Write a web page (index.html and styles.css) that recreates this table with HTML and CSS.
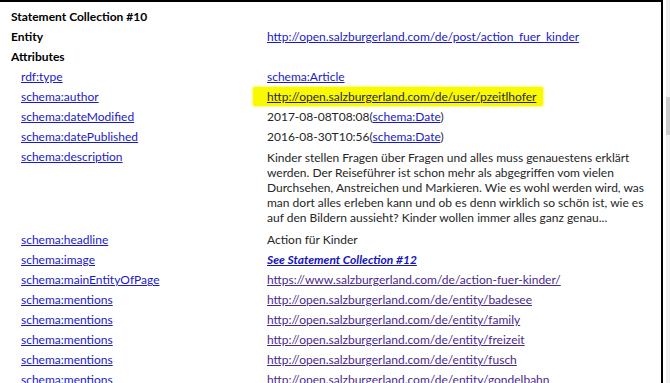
FILE: index.html
```html
<!DOCTYPE html>
<html lang="de">
<head>
<meta charset="utf-8">
<title>Statement Collection #10</title>
<link rel="stylesheet" href="styles.css">
</head>
<body>
<div class="frame">
  <div class="panel">
    <div class="title">Statement Collection #10</div>
    <div class="grid">
      <div class="head">Entity</div>
      <div class="val"><a class="link" href="#">http://open.salzburgerland.com/de/post/action_fuer_kinder</a></div>

      <div class="head span">Attributes</div>

      <div class="name"><a class="link" href="#">rdf:type</a></div>
      <div class="val"><a class="link" href="#">schema:Article</a></div>

      <div class="name"><a class="link" href="#">schema:author</a></div>
      <div class="val"><span class="marker"><a class="link visited" href="#">http://open.salzburgerland.com/de/user/pzeitlhofer</a></span></div>

      <div class="name"><a class="link" href="#">schema:dateModified</a></div>
      <div class="val">2017-08-08T08:08(<a class="link" href="#">schema:Date</a>)</div>

      <div class="name"><a class="link" href="#">schema:datePublished</a></div>
      <div class="val">2016-08-30T10:56(<a class="link" href="#">schema:Date</a>)</div>

      <div class="name"><a class="link" href="#">schema:description</a></div>
      <div class="val para">Kinder stellen Fragen über Fragen und alles muss genauestens erklärt werden. Der Reiseführer ist schon mehr als abgegriffen vom vielen Durchsehen, Anstreichen und Markieren. Wie es wohl werden wird, was man dort alles erleben kann und ob es denn wirklich so schön ist, wie es auf den Bildern aussieht? Kinder wollen immer alles ganz genau...</div>

      <div class="name"><a class="link" href="#">schema:headline</a></div>
      <div class="val">Action für Kinder</div>

      <div class="name"><a class="link" href="#">schema:image</a></div>
      <div class="val"><a class="link ref" href="#">See Statement Collection #12</a></div>

      <div class="name"><a class="link" href="#">schema:mainEntityOfPage</a></div>
      <div class="val"><a class="link visited" href="#">https://www.salzburgerland.com/de/action-fuer-kinder/</a></div>

      <div class="name"><a class="link" href="#">schema:mentions</a></div>
      <div class="val"><a class="link visited" href="#">http://open.salzburgerland.com/de/entity/badesee</a></div>

      <div class="name"><a class="link" href="#">schema:mentions</a></div>
      <div class="val"><a class="link visited" href="#">http://open.salzburgerland.com/de/entity/family</a></div>

      <div class="name"><a class="link" href="#">schema:mentions</a></div>
      <div class="val"><a class="link visited" href="#">http://open.salzburgerland.com/de/entity/freizeit</a></div>

      <div class="name"><a class="link" href="#">schema:mentions</a></div>
      <div class="val"><a class="link visited" href="#">http://open.salzburgerland.com/de/entity/fusch</a></div>

      <div class="name"><a class="link" href="#">schema:mentions</a></div>
      <div class="val"><a class="link visited" href="#">http://open.salzburgerland.com/de/entity/gondelbahn</a></div>

      <div class="name"><a class="link" href="#">schema:mentions</a></div>
      <div class="val"><a class="link visited" href="#">http://open.salzburgerland.com/de/entity/kinder</a></div>
    </div>
  </div>
  <div class="scroll"><div class="thumb"></div></div>
</div>
</body>
</html>
```
FILE: styles.css
```css
html, body {
  margin: 0;
  padding: 0;
  background: #fff;
}

.frame {
  display: flex;
  height: 383px;
  overflow: hidden;
  font-family: Lato, "Liberation Sans", sans-serif;
  font-size: 12px;
  color: #262626;
}

.panel {
  width: 644px;
  padding: 5px 6px 0 11px;
  border-top: 2px solid #000;
  border-right: 2px solid #000;
  overflow: hidden;
}

.title,
.head {
  font-weight: bold;
  color: #000;
  line-height: 20px;
  height: 20px;
}

.grid {
  display: grid;
  grid-template-columns: 256px 1fr;
  line-height: 20px;
}

.span {
  grid-column: 1 / span 2;
}

.name {
  padding-left: 10px;
  height: 20px;
}

.val {
  min-height: 20px;
}

.para {
  line-height: 15px;
  padding: 2.5px 0 5.5px;
}

.link {
  color: #1a1ac8;
  text-decoration: underline;
}

.link.visited {
  color: #4a2a8c;
}

.ref {
  font-weight: bold;
  font-style: italic;
  color: #1414b8;
}

.marker {
  display: inline-block;
  margin: -1px 0 0 -14px;
  padding: 0 7px 0 14px;
  line-height: 19px;
  background: #f9f900;
  box-shadow: 0 0 2px 1px rgba(250, 250, 0, 0.55);
  border-radius: 2px;
}

.marker .link {
  color: #2b1f4a;
}

.scroll {
  width: 4px;
  margin-left: 3px;
  background: #f0f0f0;
}

.thumb {
  margin-top: 97px;
  height: 38px;
  background: #cdcdcd;
}
```
